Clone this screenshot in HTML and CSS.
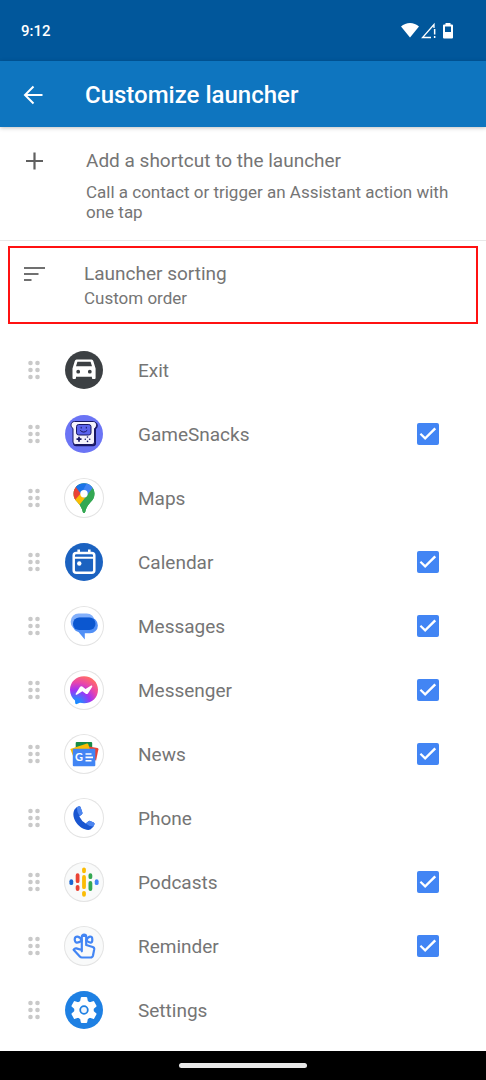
FILE: index.html
```html
<!DOCTYPE html>
<html lang="en">
    <head>
        <meta charset="utf-8">
        <meta name="viewport" content="width=device-width, initial-scale=1">
        <title>Customize launcher</title>
        <link rel="stylesheet" href="styles.css">
    </head>
    <body>
        <svg class="defs" aria-hidden="true">
            <symbol id="grip" viewBox="0 0 12 20">
                <g fill="#c9c9c9">
                    <circle cx="2.5" cy="3" r="2.3"/><circle cx="9.5" cy="3" r="2.3"/>
                    <circle cx="2.5" cy="10" r="2.3"/><circle cx="9.5" cy="10" r="2.3"/>
                    <circle cx="2.5" cy="17" r="2.3"/><circle cx="9.5" cy="17" r="2.3"/>
                </g>
            </symbol>
        </svg>
        <div class="status">
            <span>9:12</span>
            <svg width="54" height="18" viewBox="0 0 54 18" fill="#fff">
                <path d="M0 4.6C5-.2 13-.2 18 4.6L9 15.6z"/>
                <path d="M33 6V2.500L21.500 15.500H30" fill="none" stroke="#fff" stroke-width="1.3"/>
                <path d="M32.900 7h1.500v5.500h-1.500zM32.900 14h1.500v2h-1.500z"/>
                <path fill-rule="evenodd" d="M44.500 1h5v1.500h1.500a1 1 0 0 1 1 1V15.500a1 1 0 0 1-1 1h-8a1 1 0 0 1-1-1V3.500a1 1 0 0 1 1-1h1.500zM44 4.500V10h6V4.500z"/>
            </svg>
        </div>
        <header class="toolbar">
            <button class="back" aria-label="Back">
                <svg width="20" height="20" viewBox="0 0 20 20" fill="none" stroke="#fff" stroke-width="2">
                    <path d="M19.500 10H2M10.500 1.500L2 10l8.500 8.500"/>
                </svg>
            </button>
            <h1>Customize launcher</h1>
        </header>
        <main>
            <button class="option shortcut">
                <svg width="22" height="24" viewBox="0 0 22 24" stroke="#606060" stroke-width="2.2">
                    <path d="M11.500 3.500v17M3 12h17"/>
                </svg>
                <span class="text">
                    <span class="title">Add a shortcut to the launcher</span>
                    <span class="desc">Call a contact or trigger an Assistant action with one tap</span>
                </span>
            </button>
            <button class="option sorting">
                <svg width="22" height="24" viewBox="0 0 22 24" stroke="#707070" stroke-width="2.2">
                    <path d="M0 6h21M0 12h14.500M0 18h7.500"/>
                </svg>
                <span class="text">
                    <span class="title">Launcher sorting</span>
                    <span class="desc">Custom order</span>
                </span>
            </button>
            <ul class="apps">
                <li>
                    <button class="grip" aria-label="Move Exit"><svg><use href="#grip"/></svg></button>
                    <svg class="icon" viewBox="0 0 40 40">
                        <circle cx="20" cy="20" r="19" fill="#3c4043"/>
                        <path fill="#fff" fill-rule="evenodd" d="M12.500 9.500h15q1.500 0 1.800 1.500l2.300 7.500V28q0 1-1 1h-1.700q-1 0-1-1v-1.200H12V28q0 1-1 1H9.500q-1 0-1-1V18.500L10.800 11q.4-1.500 1.700-1.500zM13.400 11.700L12 16.300h16L26.600 11.700zM14.200 19.800a1.900 1.900 0 1 0 0 3.800 1.900 1.900 0 0 0 0-3.800zM25.800 19.800a1.900 1.900 0 1 0 0 3.800 1.900 1.900 0 0 0 0-3.800z"/>
                    </svg>
                    <span class="name">Exit</span>
                </li>
                <li>
                    <button class="grip" aria-label="Move GameSnacks"><svg><use href="#grip"/></svg></button>
                    <svg class="icon" viewBox="0 0 40 40">
                        <circle cx="20" cy="20" r="19" fill="#6b74f5"/>
                        <path fill="#171663" d="M11 8h20q3 1 2.800 4-.2 2-1.800 3v14.500q0 2.800-3 2.800H12q-2.500 0-2.800-2z"/>
                        <path fill="#f4f2fb" stroke="#171663" d="M10.500 7.500h18.700c4 0 4.300 5.800 1.300 7V28q0 2.500-2.500 2.500H11.500Q9 30.500 9 28V14.500c-3-1.500-2.500-7 1.500-7z"/>
                        <rect x="12.500" y="10.500" width="14.500" height="10.500" rx="2.2" fill="#5b63ed" stroke="#171663"/>
                        <path d="M17.200 12.800v1.700M22.300 12.800v1.700M16.200 16.300q3.500 3.600 7 0" fill="none" stroke="#171663"/>
                        <path d="M15 22.700v5M12.500 25.200h5" stroke="#171663" stroke-width="1.7"/>
                        <g fill="#171663"><circle cx="23.500" cy="23" r=".8"/><circle cx="23.500" cy="27.400" r=".8"/><circle cx="21.300" cy="25.200" r=".8"/><circle cx="25.700" cy="25.200" r=".8"/></g>
                    </svg>
                    <label class="name" for="gamesnacks">GameSnacks</label>
                    <input type="checkbox" id="gamesnacks" checked>
                </li>
                <li>
                    <button class="grip" aria-label="Move Maps"><svg><use href="#grip"/></svg></button>
                    <svg class="icon ring" viewBox="0 0 40 40">
                        <clipPath id="pin"><path d="M20 5.300c6 0 10.500 4.700 10.500 10.500 0 8-7.500 9-9.200 18q-.3 1.200-1.300 1.200t-1.300-1.200c-1.700-9-9.200-10-9.200-18C9.500 10 14 5.300 20 5.300z"/></clipPath>
                        <g clip-path="url(#pin)">
                            <path fill="#34a853" d="M0 0h40v40H0z"/>
                            <path fill="#fbbc04" d="M5 20L14 13l8.500 5.500L12 31z"/>
                            <path fill="#ea4335" d="M5 5h6l7 9-7 8-6-1z"/>
                            <path fill="#1a73e8" d="M11 8l5-5 11 2-10 11z"/>
                            <path fill="#4285f4" d="M24 3l8 4-2.500 5L20 20l-3-4z"/>
                            <path fill="#34a853" d="M28.900 9.500L35 7v30H14l-1-6z"/>
                        </g>
                        <circle cx="20" cy="15.700" r="3.700" fill="#fff"/>
                    </svg>
                    <span class="name">Maps</span>
                </li>
                <li>
                    <button class="grip" aria-label="Move Calendar"><svg><use href="#grip"/></svg></button>
                    <svg class="icon" viewBox="0 0 40 40">
                        <circle cx="20" cy="20" r="19" fill="#1b62c0"/>
                        <g fill="none" stroke="#fff">
                            <rect x="9.700" y="11" width="20.600" height="19.800" rx="2.500" stroke-width="2.500"/>
                            <path d="M10 15.800h20" stroke-width="2"/>
                            <path d="M14.700 7.500v4M25.300 7.500v4" stroke-width="2.600"/>
                        </g>
                        <circle cx="15.300" cy="21.500" r="2.200" fill="#fff"/>
                    </svg>
                    <label class="name" for="calendar">Calendar</label>
                    <input type="checkbox" id="calendar" checked>
                </li>
                <li>
                    <button class="grip" aria-label="Move Messages"><svg><use href="#grip"/></svg></button>
                    <svg class="icon ring" viewBox="0 0 40 40">
                        <rect x="6.700" y="7.500" width="24" height="16.500" rx="8" fill="#83b0fb"/>
                        <path fill="#5290f6" d="M16.500 11.500H26a7.800 7.800 0 0 1 0 15.800h-5.200v6.200l-6.300-7.500C7.300 24.500 6.500 12 16.500 11.500z"/>
                        <rect x="9" y="11.500" width="22.500" height="12.500" rx="6.200" fill="#0b57d0"/>
                    </svg>
                    <label class="name" for="messages">Messages</label>
                    <input type="checkbox" id="messages" checked>
                </li>
                <li>
                    <button class="grip" aria-label="Move Messenger"><svg><use href="#grip"/></svg></button>
                    <svg class="icon ring" viewBox="0 0 40 40">
                        <radialGradient id="glow" gradientUnits="userSpaceOnUse" cx="12" cy="35" r="30">
                            <stop offset="0" stop-color="#0a8fff"/>
                            <stop offset=".2" stop-color="#2d83ff"/>
                            <stop offset=".5" stop-color="#a033f5"/>
                            <stop offset=".75" stop-color="#e846ac"/>
                            <stop offset="1" stop-color="#ff6a6a"/>
                        </radialGradient>
                        <path fill="url(#glow)" d="M20 6.200c8 0 14 5.800 14 13.600s-6 13.500-14 13.500c-1.500 0-2.600-.2-4-.5l-3.200 1.300q-1.500.5-1.600-1l-.2-2.600C8 28 6 24.500 6 19.800 6 12 12 6.200 20 6.200z"/>
                        <path fill="#fff" d="M11.800 23.400l4.100-6.300q1-1.400 2.400-.5l3.200 2.500 5.300-3.300c1-.6 2 .2 1.300 1.200l-4 6.200q-1 1.400-2.400.5L18.400 21.200l-5.200 3.300c-1 .6-2-.1-1.400-1.100z"/>
                    </svg>
                    <label class="name" for="messenger">Messenger</label>
                    <input type="checkbox" id="messenger" checked>
                </li>
                <li>
                    <button class="grip" aria-label="Move News"><svg><use href="#grip"/></svg></button>
                    <svg class="icon ring" viewBox="0 0 40 40">
                        <rect x="11.700" y="8" width="16.500" height="14" rx="1" fill="#188c47"/>
                        <path fill="#ea4335" d="M22 12l11.500 2q1 .2.900 1.200L32 27z"/>
                        <path fill="#fbbc04" d="M6.300 15L23 9.500q1-.2 1.200.6L29 25l-18 2z"/>
                        <rect x="8.800" y="14.800" width="22.500" height="17.400" rx="1" fill="#4285f4"/>
                        <text x="11" y="27" class="news-letter">G</text>
                        <path d="M21.500 20h6M21.500 23.400h7.500M21.500 26.800h6" stroke="#fff" stroke-width="1.600"/>
                    </svg>
                    <label class="name" for="news">News</label>
                    <input type="checkbox" id="news" checked>
                </li>
                <li>
                    <button class="grip" aria-label="Move Phone"><svg><use href="#grip"/></svg></button>
                    <svg class="icon ring" viewBox="0 0 40 40">
                        <path fill="#1a56d0" d="M10.500 11.500q2-3 4.500-3.200 1.300 0 1.700 1.200l1.700 5q.3 1-.4 1.700L15.300 18.500q2.200 4.500 6.400 7l2.800-2.300q.8-.6 1.700-.2l3.500 1.600q1.300.7.700 2-1 3.300-4 5C18 34 5.500 21 10.500 11.500z"/>
                        <path fill="#4c85f0" d="M12.800 9.300q3.200-2.200 3.900.2l1.700 5q.3 1-.4 1.700L15.600 18q-2.800-4-2.800-8.700zM21.700 25.500l2.800-2.300q.8-.6 1.700-.2l3.500 1.600q1.300.7.700 2l-.7 1.900q-4.500.2-8-3z"/>
                    </svg>
                    <span class="name">Phone</span>
                </li>
                <li>
                    <button class="grip" aria-label="Move Podcasts"><svg><use href="#grip"/></svg></button>
                    <svg class="icon ring pale" viewBox="0 0 40 40">
                        <g fill="none" stroke-width="3.800" stroke-linecap="round">
                            <path stroke="#1967d2" d="M7.300 19.200v2"/>
                            <path stroke="#ea4335" d="M13.600 13.200v6M13.600 24.800v2.300"/>
                            <path stroke="#fbbc04" d="M20 7.300v2M20 15v10.200M20 30.800v2"/>
                            <path stroke="#34a853" d="M26.400 13.200v2M26.400 20.900v6.200"/>
                            <path stroke="#4285f4" d="M32.700 19.200v2"/>
                        </g>
                    </svg>
                    <label class="name" for="podcasts">Podcasts</label>
                    <input type="checkbox" id="podcasts" checked>
                </li>
                <li>
                    <button class="grip" aria-label="Move Reminder"><svg><use href="#grip"/></svg></button>
                    <svg class="icon ring pale" viewBox="0 0 40 40">
                        <g fill="none" stroke="#4285f4" stroke-width="2.200" stroke-linejoin="round">
                            <path d="M17.800 25.300V10.800a2.200 2.200 0 0 1 4.400 0V19l6.500 2q1.800.6 1.500 2.400L29 29.500q-.5 2-2.500 2H18q-1.300 0-2.200-1L9.600 23.800l1-1q.8-.7 1.800-.4l5.400 1.600z"/>
                            <path d="M17.800 14.700Q11 19 10.700 13.500C10.700 9 16 9.800 17.800 14.700zM22.200 14.700Q28.500 19 28.300 13.500C28.300 9 24 9.800 22.200 14.700zM17.800 10h4.400"/>
                        </g>
                    </svg>
                    <label class="name" for="reminder">Reminder</label>
                    <input type="checkbox" id="reminder" checked>
                </li>
                <li>
                    <button class="grip" aria-label="Move Settings"><svg><use href="#grip"/></svg></button>
                    <svg class="icon" viewBox="0 0 40 40">
                        <circle cx="20" cy="20" r="19" fill="#1e80e3"/>
                        <g fill="#fff">
                            <circle cx="20" cy="20" r="9.800"/>
                            <path id="tooth" d="M16 12l.8-4.200q.2-.8 1-.8h4.400q.8 0 1 .8l.8 4.200v16l-.8 4.200q-.2.800-1 .8h-4.400q-.8 0-1-.8l-.8-4.200z"/>
                            <use href="#tooth" transform="rotate(60 20 20)"/>
                            <use href="#tooth" transform="rotate(120 20 20)"/>
                        </g>
                        <circle cx="20" cy="20" r="3.800" fill="#f1f6fd" stroke="#1e80e3" stroke-width="1.800"/>
                    </svg>
                    <span class="name">Settings</span>
                </li>
            </ul>
        </main>
        <footer class="navbar"><div class="pill"></div></footer>
    </body>
</html>
```
FILE: styles.css
```css
*{
    box-sizing: border-box;
}
body{
    display: flex;
    flex-direction: column;
    min-height: 100vh;
    margin: 0;
    background: #fff;
    color: #757575;
    font-family: Roboto, "Liberation Sans", sans-serif;
}
button{
    padding: 0;
    border: none;
    background: none;
    color: inherit;
    font: inherit;
    text-align: left;
    cursor: pointer;
}
svg{
    flex: none;
    display: block;
}
.defs{
    position: absolute;
    width: 0;
    height: 0;
}

.status{
    display: flex;
    align-items: center;
    justify-content: space-between;
    height: 61px;
    padding: 0 31px 0 21px;
    background: #01579b;
    color: #fff;
    font-size: 15px;
    font-weight: 500;
}
.toolbar{
    display: flex;
    align-items: center;
    gap: 42px;
    height: 66px;
    padding: 2px 23px 0;
    background: #0e75bf;
    color: #fff;
    box-shadow: 0 1px 4px rgba(0, 0, 0, .25);
}
h1{
    margin: 0;
    font-size: 24px;
    font-weight: 500;
}

main{
    flex: 1;
}
.option{
    display: flex;
    align-items: flex-start;
}
.title, .desc{
    display: block;
}
.title{
    font-size: 19px;
    line-height: 24px;
}
.desc{
    font-size: 17px;
    line-height: 20px;
}
.shortcut{
    gap: 41px;
    width: 100%;
    padding: 22px 24px 18px 23px;
    border-bottom: 1px solid #e8e8e8;
}
.shortcut .desc{
    margin-top: 9px;
}
.sorting{
    gap: 38px;
    width: calc(100% - 16px);
    margin: 5px 8px 0;
    padding: 14px;
    border: 2px solid #f11;
}
.sorting .desc{
    margin-top: 2px;
}

.apps{
    margin: 0;
    padding: 14px 47px 8px 28px;
    list-style: none;
}
.apps li{
    display: flex;
    align-items: center;
    height: 64px;
}
.grip{
    margin-right: 24px;
    cursor: move;
}
.grip svg{
    width: 12px;
    height: 20px;
}
.icon{
    width: 40px;
    height: 40px;
    margin-right: 34px;
    border-radius: 50%;
}
.ring{
    box-shadow: inset 0 0 0 1px #e4e4e4;
}
.pale{
    background: #f9fafa;
}
.news-letter{
    fill: #fff;
    font: bold 11px Lato, sans-serif;
}
.name{
    flex: 1;
    padding-top: 2px;
    font-size: 19px;
    line-height: 24px;
}
input[type="checkbox"]{
    appearance: none;
    width: 22px;
    height: 22px;
    margin: 0;
    border: 2px solid #757575;
    border-radius: 2px;
}
input[type="checkbox"]:checked{
    border: none;
    background: #4285f4;
}
input[type="checkbox"]:checked:before{
    content: "";
    display: block;
    width: 22px;
    height: 22px;
    background: #fff;
    clip-path: polygon(12% 52%, 19% 45%, 37% 62%, 79% 20%, 87% 28%, 37% 77%);
}

.navbar{
    display: flex;
    align-items: center;
    justify-content: center;
    height: 29px;
    background: #000;
}
.pill{
    width: 128px;
    height: 5px;
    border-radius: 3px;
    background: #e8e8e8;
}
```
